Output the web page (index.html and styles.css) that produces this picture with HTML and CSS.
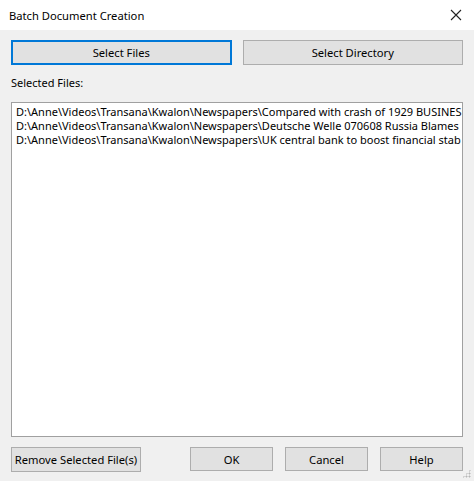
FILE: index.html
```html
<!DOCTYPE html>
<html lang="en">
<head>
  <meta charset="UTF-8" />
  <title>Batch Document Creation</title>
  <link rel="stylesheet" href="styles.css">
</head>
<body>

  <!-- Title bar -->
  <div class="titlebar">
    <span class="title">Batch Document Creation</span>
    <span class="close">
      <svg width="12" height="12" viewBox="0 0 12 12"><path d="M1 1 L11 11 M11 1 L1 11" stroke="#222" stroke-width="1.1" fill="none"/></svg>
    </span>
  </div>

  <div class="dialog">
    <div class="top-buttons">
      <button class="btn focused">Select Files</button>
      <button class="btn">Select Directory</button>
    </div>

    <div class="label">Selected Files:</div>

    <div class="file-list">
      <div class="file-item">D:\Anne\Videos\Transana\Kwalon\Newspapers\Compared with crash of 1929 BUSINES</div>
      <div class="file-item">D:\Anne\Videos\Transana\Kwalon\Newspapers\Deutsche Welle 070608 Russia Blames U</div>
      <div class="file-item">D:\Anne\Videos\Transana\Kwalon\Newspapers\UK central bank to boost financial stab</div>
    </div>

    <div class="bottom-buttons">
      <button class="btn remove">Remove Selected File(s)</button>
      <div class="spacer"></div>
      <button class="btn small">OK</button>
      <button class="btn small">Cancel</button>
      <button class="btn small">Help</button>
    </div>
  </div>

  <div class="grip"></div>
</body>
</html>
```

FILE: styles.css
```css
body {
  margin: 0;
  padding: 0;
  width: 474px;
  height: 481px;
  overflow: hidden;
  position: relative;
  font-family: 'Noto Sans', 'Open Sans', sans-serif;
  font-size: 11px;
  color: #000;
  background: #f0f0f0;
}

.titlebar {
  height: 30px;
  background: #fff;
  display: flex;
  align-items: center;
  justify-content: space-between;
  padding: 0 9px;
}

.title {
  font-size: 11.2px;
  color: #000;
}

.close {
  display: flex;
  margin-right: 3px;
}

.dialog {
  padding: 10px 11px 0;
}

.top-buttons {
  display: grid;
  grid-template-columns: 1fr 1fr;
  gap: 11px;
}

.btn {
  height: 25px;
  background: #e1e1e1;
  border: 1px solid #adadad;
  font-family: inherit;
  font-size: 11.2px;
  color: #000;
  padding: 0;
  white-space: nowrap;
}

.btn.focused {
  border-color: #0078d7;
  box-shadow: inset 0 0 0 1px #0078d7;
}

.label {
  margin-top: 9px;
  height: 28px;
  line-height: 18px;
}

.file-list {
  height: 331px;
  background: #fff;
  border: 1px solid #a0a0a0;
  padding: 2px 0 0 4px;
  overflow: hidden;
}

.file-item {
  white-space: nowrap;
  line-height: 14px;
}

.bottom-buttons {
  display: flex;
  gap: 12px;
  margin-top: 10px;
}

.btn.remove {
  width: 130px;
}

.spacer {
  flex: 1;
}

.btn.small {
  width: 83px;
  height: 24px;
}

.grip {
  position: absolute;
  right: 3px;
  bottom: 3px;
  width: 9px;
  height: 9px;
  background: radial-gradient(circle, #b5b5b5 0.8px, transparent 1.2px) 0 0 / 3px 3px;
  clip-path: polygon(100% 0, 100% 100%, 0 100%);
}
```
